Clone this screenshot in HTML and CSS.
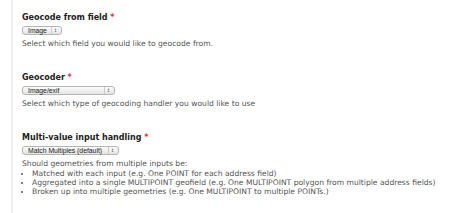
FILE: index.html
```html
<!DOCTYPE html>
<html lang="en">
<head>
    <meta charset="UTF-8">
    <title>Geofield settings</title>
    <link rel="stylesheet" href="styles.css">
</head>
<body>
    <div class="panel">
        <div class="form-item">
            <label>Geocode from field <span class="req">*</span></label>
            <div class="select w-image"><span>Image</span><span class="arrows">&#x2195;</span></div>
            <div class="desc">Select which field you would like to geocode from.</div>
        </div>

        <div class="form-item">
            <label>Geocoder <span class="req">*</span></label>
            <div class="select w-exif"><span>Image/exif</span><span class="arrows">&#x2195;</span></div>
            <div class="desc">Select which type of geocoding handler you would like to use</div>
        </div>

        <div class="form-item">
            <label>Multi-value input handling <span class="req">*</span></label>
            <div class="select w-multi"><span>Match Multiples (default)</span><span class="arrows">&#x2195;</span></div>
            <div class="desc">
                Should geometries from multiple inputs be:
                <ul>
                    <li>Matched with each input (e.g. One POINT for each address field)</li>
                    <li>Aggregated into a single MULTIPOINT geofield (e.g. One MULTIPOINT polygon from multiple address fields)</li>
                    <li>Broken up into multiple geometries (e.g. One MULTIPOINT to multiple POINTs.)</li>
                </ul>
            </div>
        </div>
    </div>
</body>
</html>
```

FILE: styles.css
```css
body {
    margin: 0;
    background: #fff;
    font-family: "DejaVu Sans", Verdana, sans-serif;
    color: #333;
}

.panel {
    margin-left: 11px;
    border-left: 2px solid #ececec;
    padding: 12px 0 0 9px;
    height: 201px;
}

.form-item {
    margin-bottom: 24px;
}

.form-item label {
    display: block;
    font-weight: bold;
    font-size: 8px;
    color: #222;
    line-height: 11px;
    margin-bottom: 3px;
}

.req {
    color: #d33;
}

.select {
    display: flex;
    justify-content: space-between;
    align-items: center;
    box-sizing: border-box;
    height: 9px;
    padding: 0 4px 0 5px;
    border: 1px solid #b5b5b5;
    border-radius: 3px;
    background: linear-gradient(#fbfbfb, #e4e4e4);
    font-family: "Liberation Sans", Arial, sans-serif;
    font-size: 6.8px;
    color: #222;
}

.arrows {
    font-size: 6px;
    border-left: 1px solid #ccc;
    padding-left: 2px;
    line-height: 7px;
}

.w-image { width: 40px; }
.w-exif { width: 93px; }
.w-multi { width: 97px; }

.desc {
    margin-top: 4px;
    font-size: 7.6px;
    line-height: 9.2px;
    color: #555;
}

.desc ul {
    margin: 0;
    padding-left: 10px;
}
```
